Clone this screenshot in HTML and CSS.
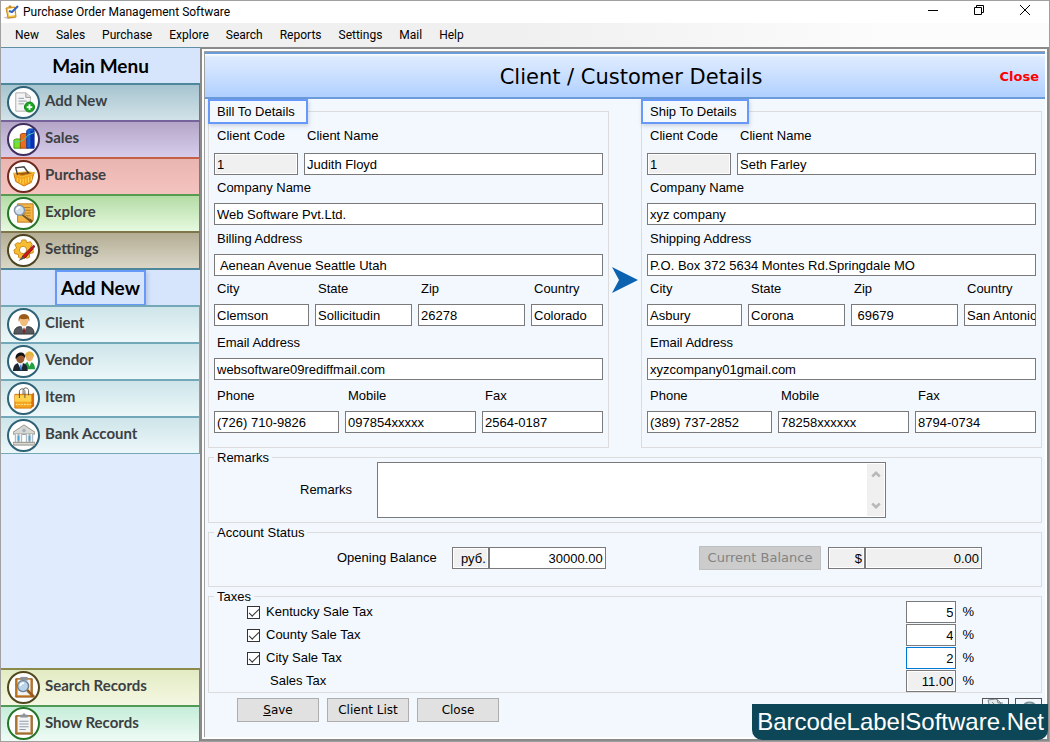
FILE: index.html
```
<!DOCTYPE html>
<html lang="en">
<head>
<meta charset="utf-8">
<title>Purchase Order Management Software</title>
<link rel="stylesheet" href="styles.css">
</head>
<body>
<div class="window">
  <header class="titlebar">
    <svg class="app-icon" viewBox="0 0 16 16" aria-hidden="true"><path d="M0 13l4 2 9-1-3-2z" fill="#c9c9c9"/><path d="M3 4l9-1 1 10-8 1z" fill="#f6c544" stroke="#c98a1c"/><path d="M5 5l6-1 1 7-6 1z" fill="#fff"/><path d="M5 3l2-2 2 2z" fill="#c98a1c"/><path d="M6 7l3 1 6-6" fill="none" stroke="#2d62c4" stroke-width="2"/></svg>
    <h1 class="app-title">Purchase Order Management Software</h1>
    <div class="window-controls">
      <button type="button" class="window-button" aria-label="Minimize"><svg viewBox="0 0 12 12"><path d="M1 6.500h10"/></svg></button>
      <button type="button" class="window-button" aria-label="Restore"><svg viewBox="0 0 12 12"><path d="M1.500 3.500h7v7h-7zM3.500 3.500v-2h7v7h-2"/></svg></button>
      <button type="button" class="window-button" aria-label="Close window"><svg viewBox="0 0 12 12"><path d="M1 1l10 10M11 1L1 11"/></svg></button>
    </div>
  </header>
  <nav class="menubar" aria-label="Application">
    <button type="button">New</button><button type="button">Sales</button><button type="button">Purchase</button><button type="button">Explore</button><button type="button">Search</button><button type="button">Reports</button><button type="button">Settings</button><button type="button">Mail</button><button type="button">Help</button>
  </nav>
  <div class="workspace">
    <aside class="sidebar">
      <h2 class="side-heading">Main Menu</h2>
      <button type="button" class="side-item blue"><span class="disc"><svg viewBox="0 0 24 24"><path d="M3 2h11l5 4v16H3z" fill="#f4f4f4" stroke="#aaa"/><path d="M14 2v5h5" fill="#ddd" stroke="#999"/><path d="M6 8h6M6 11h9M6 14h6" stroke="#8a9aa8"/><circle cx="18" cy="17.500" r="5.500" fill="#17a81f" stroke="#0b7c14"/><path d="M18 14.500v6M15 17.500h6" stroke="#fff" stroke-width="2"/></svg></span><span class="side-label">Add New</span></button>
      <button type="button" class="side-item purple"><span class="disc"><svg viewBox="0 0 24 24"><path d="M1 13l2-1h6v10H1z" fill="#7be02c" stroke="#3d9a12"/><path d="M8 7l2-1h6v16H8z" fill="#e96f1c" stroke="#a8480d"/><path d="M15 3l2-2h6v21h-8z" fill="#1767d6" stroke="#0b2f9c"/><path d="M19 3h4v19h-4z" fill="#0a2fb4"/><path d="M1 15c6 1 11-1 15-7l7-3" fill="none" stroke="#4fd8a8"/></svg></span><span class="side-label">Sales</span></button>
      <button type="button" class="side-item red"><span class="disc"><svg viewBox="0 0 24 24"><path d="M1 10l22-2-3 11-8 4-9-5z" fill="#f5a41c" stroke="#c9760c"/><path d="M0 9l9 4 15-4-7-2z" fill="#e08b12" stroke="#f7c24a"/><path d="M3 9l7 2 10-2-4-1z" fill="#9c5a10"/><path d="M5 11L3 3l9-1 5 7" fill="none" stroke="#444" stroke-width="1.500"/><path d="M5 14v4M8 15v5M11 15v6M14 14v6M17 13v6M20 12v5" stroke="#ffdc5c" fill="none"/></svg></span><span class="side-label">Purchase</span></button>
      <button type="button" class="side-item green"><span class="disc"><svg viewBox="0 0 24 24"><path d="M5 2h17v18l-2 2H5z" fill="#f3b545" stroke="#bd7b1b"/><path d="M10 6h9M11 9h8M12 12h7M12 15h7" stroke="#b87818"/><path d="M10 13l11 9" stroke="#7b5218" stroke-width="3"/><path d="M11 13l7 5" stroke="#e8c783"/><circle cx="7" cy="9" r="5.500" fill="#cfdfed" stroke="#8293a6" stroke-width="1.500"/><path d="M4 9a3 3 0 0 1 4-3" fill="none" stroke="#fff" stroke-width="2"/></svg></span><span class="side-label">Explore</span></button>
      <button type="button" class="side-item brown"><span class="disc"><svg viewBox="0 0 24 24"><path d="M10 1h4l1 3 4-1 2 3-2 3 3 2v4l-4 1v4l-3 1-3-2-2 3-4-2v-3l-4-1-1-4 3-2-2-4 3-2 3 1z" fill="#f7bd32" stroke="#c98410"/><circle cx="11" cy="12" r="4" fill="#fff" stroke="#c98410"/><path d="M10 19L22 7l2 1-11 13z" fill="#d5141c" stroke="#71151a"/><path d="M6 24l4-5 3 2z" fill="#555"/></svg></span><span class="side-label">Settings</span></button>
      <h2 class="side-heading"><span class="highlight">Add New</span></h2>
      <button type="button" class="side-item sky"><span class="disc"><svg viewBox="0 0 24 24"><path d="M1 23c0-6 3-8 7-8h8c4 0 7 2 7 8z" fill="#55585d" stroke="#2f3135"/><path d="M9 14h6l-3 7z" fill="#fff"/><path d="M11.500 16h1l1 5-1.500 1-1.500-1z" fill="#8e2020"/><ellipse cx="12" cy="8.500" rx="4.500" ry="6" fill="#f2bd7c"/><path d="M6.500 10C5 4 8 1 12 1s7 3 5.500 9l-1-4c-3 1-7 1-9 0z" fill="#9b5a17"/></svg></span><span class="side-label">Client</span></button>
      <button type="button" class="side-item sky"><span class="disc"><svg viewBox="0 0 24 24"><path d="M12 21c0-6 2-8 6-8s6 3 6 8z" fill="#23a142"/><path d="M16 13h4l-2 5z" fill="#fff"/><ellipse cx="18" cy="7.500" rx="4" ry="5" fill="#f0b26a"/><path d="M13 8c-1-8 11-9 10 0-2-3-5-3-10 0z" fill="#e4b53a"/><path d="M0 23c0-6 3-9 8-9s8 2 8 9z" fill="#1c2530"/><path d="M5 14h6l-2 8z" fill="#e9f2ff"/><path d="M8 16l1 0 1 6H8z" fill="#1667c9"/><ellipse cx="8" cy="9" rx="4.500" ry="5.500" fill="#9b5a2e"/><path d="M3 10C1 1 15 0 13 9c-2-4-6-4-10 1z" fill="#111"/></svg></span><span class="side-label">Vendor</span></button>
      <button type="button" class="side-item sky"><span class="disc"><svg viewBox="0 0 24 24"><path d="M2 8h18v15H2z" fill="#f5a51f" stroke="#d07a0c"/><path d="M20 8l3-2v15l-3 2z" fill="#d9700b"/><path d="M2 9h18v7H2z" fill="#ffd24d"/><path d="M3 19h17" stroke="#fff3a8" stroke-dasharray="2 1"/><path d="M7 12V5c0-4 6-4 6 0v7M11 8V4c0-4 6-4 6 0v5" fill="none" stroke="#5c5148"/></svg></span><span class="side-label">Item</span></button>
      <button type="button" class="side-item sky last"><span class="disc"><svg viewBox="0 0 24 24"><path d="M0 9L12 1l12 8v2H0z" fill="#d9d9d4" stroke="#8c8c84"/><circle cx="12" cy="7" r="2" fill="#a8b4bd"/><path d="M2 11h20v9H2z" fill="#9aabb8"/><path d="M3 11h2v9H3zM7 11h2v9H7zM15 11h2v9h-2zM19 11h2v9h-2z" fill="#f1f1ee"/><path d="M10 12h4v8h-4z" fill="#fff"/><path d="M5 13h2v5H5zM17 13h2v5h-2z" fill="#4da5d8"/><path d="M0 20h24v3H0z" fill="#d9d9d4" stroke="#8c8c84"/></svg></span><span class="side-label">Bank Account</span></button>
      <div class="side-bottom">
        <button type="button" class="side-item olive"><span class="disc"><svg viewBox="0 0 24 24"><path d="M3 3h18v20H3z" fill="#c97e24" stroke="#8f5410"/><path d="M5 4h14v17H5z" fill="#eef2f6"/><path d="M8 1h8v4H8z" fill="#8d949c"/><path d="M14 14l9 9" stroke="#9a5c1c" stroke-width="3"/><circle cx="11" cy="11" r="6" fill="#b9d3ea" stroke="#6d8092" stroke-width="1.500"/><path d="M8 11a3 3 0 0 1 4-3" fill="none" stroke="#fff" stroke-width="2"/></svg></span><span class="side-label">Search Records</span></button>
        <button type="button" class="side-item mint"><span class="disc"><svg viewBox="0 0 24 24"><path d="M3 3h18v20H3z" fill="#b8803c" stroke="#80500f"/><path d="M5 4h14v17H5z" fill="#f2f4f6"/><path d="M8 2h2l2-2 2 2h2v3H8z" fill="#8d949c"/><path d="M7 9h10M7 12h10M7 15h10M7 18h7" stroke="#8a949e"/></svg></span><span class="side-label">Show Records</span></button>
      </div>
    </aside>
    <main class="panel">
      <div class="panel-inner">
        <div class="panel-header">
          <h2>Client / Customer Details</h2>
          <button type="button" class="close-link">Close</button>
        </div>
        <form class="form">
          <div class="parties">
            <fieldset class="group party">
              <legend><span>Bill To Details</span></legend>
              <div class="row code-row">
                <label class="field">Client Code<input class="input readonly" value="1" readonly></label>
                <label class="field">Client Name<input class="input" value="Judith Floyd"></label>
              </div>
              <div class="row"><label class="field">Company Name<input class="input" value="Web Software Pvt.Ltd."></label></div>
              <div class="row address-row"><label class="field">Billing Address<input class="input" value=" Aenean Avenue Seattle Utah"></label></div>
              <div class="row city-row">
                <label class="field">City<input class="input" value="Clemson"></label>
                <label class="field">State<input class="input" value="Sollicitudin"></label>
                <label class="field">Zip<input class="input" value="26278"></label>
                <label class="field">Country<input class="input" value="Colorado"></label>
              </div>
              <div class="row email-row"><label class="field">Email Address<input class="input" value="websoftware09rediffmail.com"></label></div>
              <div class="row phone-row">
                <label class="field">Phone<input class="input" value="(726) 710-9826"></label>
                <label class="field">Mobile<input class="input" value="097854xxxxx"></label>
                <label class="field">Fax<input class="input" value="2564-0187"></label>
              </div>
            </fieldset>
            <svg class="copy-arrow" viewBox="0 0 26 26" aria-hidden="true"><path d="M0 0l26 13-26 13 7-13z" fill="#0a62b0"/></svg>
            <fieldset class="group party">
              <legend><span>Ship To Details</span></legend>
              <div class="row code-row">
                <label class="field">Client Code<input class="input readonly" value="1" readonly></label>
                <label class="field">Client Name<input class="input" value="Seth Farley"></label>
              </div>
              <div class="row"><label class="field">Company Name<input class="input" value="xyz company"></label></div>
              <div class="row address-row"><label class="field">Shipping Address<input class="input" value="P.O. Box 372 5634 Montes Rd.Springdale MO"></label></div>
              <div class="row city-row">
                <label class="field">City<input class="input" value="Asbury"></label>
                <label class="field">State<input class="input" value="Corona"></label>
                <label class="field">Zip<input class="input" value=" 69679"></label>
                <label class="field">Country<input class="input clipped" value="San Antonio"></label>
              </div>
              <div class="row email-row"><label class="field">Email Address<input class="input" value="xyzcompany01gmail.com"></label></div>
              <div class="row phone-row">
                <label class="field">Phone<input class="input" value="(389) 737-2852"></label>
                <label class="field">Mobile<input class="input" value="78258xxxxxx"></label>
                <label class="field">Fax<input class="input" value="8794-0734"></label>
              </div>
            </fieldset>
          </div>
          <fieldset class="group remarks">
            <legend>Remarks</legend>
            <div class="remarks-row">
              <label for="remarks">Remarks</label>
              <div class="text-area">
                <textarea id="remarks"></textarea>
                <div class="scrollbar" aria-hidden="true">
                  <svg viewBox="0 0 8 6"><path d="M1 5l3-3 3 3"/></svg>
                  <svg viewBox="0 0 8 6"><path d="M1 1l3 3 3-3"/></svg>
                </div>
              </div>
            </div>
          </fieldset>
          <fieldset class="group account">
            <legend>Account Status</legend>
            <div class="account-row">
              <label for="opening">Opening Balance</label>
              <div class="money"><input class="input readonly currency" aria-label="Opening currency" value="руб." readonly><input class="input amount" id="opening" value="30000.00"></div>
              <button type="button" class="button current" disabled>Current Balance</button>
              <div class="money"><input class="input readonly currency" aria-label="Current currency" value="$" readonly><input class="input readonly amount" aria-label="Current balance" value="0.00" readonly></div>
            </div>
          </fieldset>
          <fieldset class="group taxes">
            <legend>Taxes</legend>
            <div class="tax-row"><label><input type="checkbox" class="check" checked>Kentucky Sale Tax</label><input class="input rate" aria-label="Kentucky rate" value="5"><span>%</span></div>
            <div class="tax-row"><label><input type="checkbox" class="check" checked>County Sale Tax</label><input class="input rate" aria-label="County rate" value="4"><span>%</span></div>
            <div class="tax-row"><label><input type="checkbox" class="check" checked>City Sale Tax</label><input class="input rate active" aria-label="City rate" value="2"><span>%</span></div>
            <div class="tax-row"><label class="total" for="total">Sales Tax</label><input class="input readonly rate" id="total" value="11.00" readonly><span>%</span></div>
          </fieldset>
          <div class="actions">
            <button type="button" class="button"><u>S</u>ave</button>
            <button type="button" class="button">Client List</button>
            <button type="button" class="button">Close</button>
            <div class="tools">
              <button type="button" class="tool" aria-label="Print"><svg viewBox="0 0 24 20"><path d="M4 1l8-1 4 3 3 10H7z" fill="#e6eaec" stroke="#7d8b91"/><path d="M8 3l5 5M13 0l1 4 5 0" fill="none" stroke="#7d8b91"/></svg></button>
              <button type="button" class="tool" aria-label="Preview"><svg viewBox="0 0 24 20"><path d="M6 8c2-6 11-6 13 0" fill="none" stroke="#7f959d" stroke-width="2"/><circle cx="13" cy="9" r="4" fill="#9aa8ae"/></svg></button>
            </div>
          </div>
        </form>
      </div>
    </main>
  </div>
  <div class="site-badge">BarcodeLabelSoftware.Net</div>
</div>
</body>
</html>
```
FILE: styles.css
```
* { box-sizing: border-box; }
body {
  margin: 0;
  color: #000;
  font: 13px/16px "Liberation Sans", Arial, sans-serif;
}
h1, h2 { margin: 0; font-weight: 400; }
button, input, textarea { font: inherit; color: inherit; }
button { padding: 0; border: 0; background: none; }

.window {
  position: relative;
  display: flex;
  flex-direction: column;
  min-height: 100vh;
  border: 1px solid #a0a0a0;
  background: #fff;
}
.titlebar { display: flex; align-items: center; height: 22px; padding: 0 1px 0 2px; }
.app-icon { width: 16px; height: 16px; margin-right: 4px; }
.app-title { flex: 1; font: 12px/16px Roboto, sans-serif; }
.window-controls { display: flex; }
.window-button { width: 46px; height: 20px; }
.window-button svg { width: 12px; height: 12px; fill: none; stroke: #000; }

.menubar {
  display: flex;
  gap: 17px;
  height: 24px;
  padding-left: 14px;
  background: linear-gradient(to right, #f0f0f0 50%, #fcfcfc 85%);
  font: 12px/16px Roboto, sans-serif;
}
.workspace { display: flex; flex: 1; }

.sidebar {
  display: flex;
  flex-direction: column;
  width: 199px;
  background: #e0ebfd;
  border-top: 1px solid #5f8fa2;
}
.side-heading {
  display: flex;
  align-items: center;
  justify-content: center;
  height: 35px;
  background: #d6e5fb;
  font: 700 19px/24px Lato, sans-serif;
}
.side-heading ~ .side-heading { height: 37px; border-top: 2px solid #4d8799; }
.highlight {
  padding: 4px;
  border: 2px solid #6699f8;
  box-shadow: 2px 2px 4px #7d8ba855;
}
.side-item {
  display: flex;
  align-items: center;
  gap: 5px;
  height: 37px;
  padding: 0 0 1px 6px;
  border-top: 2px solid;
  border-right: 1px solid;
  border-color: var(--edge);
  background: linear-gradient(var(--from), var(--to));
  color: #3c4043;
  font: 700 15px/20px Lato, sans-serif;
  text-align: left;
}
.side-label { padding-bottom: 4px; }
.side-item.last { height: 38px; border-bottom: 1px solid var(--edge); }
.disc {
  display: flex;
  align-items: center;
  justify-content: center;
  width: 33px;
  height: 33px;
  border: 2px solid var(--ring);
  border-radius: 50%;
  background: #fff;
}
.disc svg { width: 22px; height: 22px; }
.blue { --edge: #4d8799; --ring: #2f6177; --from: #a6c4cf; --to: #d2e2e8; }
.purple { --edge: #74649b; --ring: #41305f; --from: #b4a5c7; --to: #d7cdeb; }
.red { --edge: #c75f47; --ring: #6e2a1c; --from: #e9b5b1; --to: #f5c3bf; }
.green { --edge: #579b50; --ring: #257529; --from: #b4dca5; --to: #e6f9df; }
.brown { --edge: #7f764c; --ring: #4c441f; --from: #b3ad94; --to: #dbd7c7; }
.sky { --edge: #73a8b9; --ring: #2f6177; --from: #cee5e9; --to: #ecf7f9; }
.olive { --edge: #8b8a4a; --ring: #51471c; --from: #e2ebc3; --to: #f5f7e2; }
.side-item.mint { --edge: #4f9a57; --ring: #257529; --from: #c6edd9; --to: #eefbf5; height: 36px; }
.side-bottom { display: flex; flex-direction: column; margin-top: auto; }

.panel {
  display: flex;
  flex: 1;
  min-width: 0;
  padding: 2px;
  border: 2px solid #8a8a8a;
  background: #fff;
}
.panel-inner {
  display: flex;
  flex: 1;
  flex-direction: column;
  min-width: 0;
  border: solid #a0a0a0;
  border-width: 1px 0 0 1px;
  background: #f3f8ff;
}
.panel-header {
  display: grid;
  grid-template-columns: 1fr auto 1fr;
  align-items: center;
  height: 47px;
  padding: 3px 6px 0 18px;
  border-top: 2px solid #6b9bd9;
  border-bottom: 2px solid #6b9bd9;
  background: linear-gradient(#fff, #deebff 3px, #cfe2ff 40%, #b0d0ff);
  font-family: "DejaVu Sans", Verdana, sans-serif;
}
.panel-header h2 { grid-column: 2; font-size: 21px; line-height: 28px; }
.close-link { justify-self: end; color: #f00; font-weight: 700; }

.form { display: flex; flex: 1; flex-direction: column; padding: 0 3px; }
.group { min-width: 0; margin: 4px 0 0; padding: 0 5px; border: 1px solid #dcdcdc; }
.group legend { height: 10px; padding: 0 3px; line-height: 12px; }
.parties { display: grid; grid-template-columns: 1fr 32px 1fr; }
.group.party { margin: 0; padding: 4px 5px 14px; }
.party legend {
  display: flex;
  align-items: center;
  height: 25px;
  margin-left: -6px;
  padding: 1px 11px 0 7px;
  border: 2px solid #6699f8;
  background: #f3f8ff;
  box-shadow: 1px 2px 4px #7d8ba855;
}
.copy-arrow { width: 26px; height: 26px; margin-top: 12px; place-self: center; }
.row { display: grid; gap: 6px; margin-top: 5px; }
.row.code-row { grid-template-columns: 84fr 299fr; margin-top: 0; }
.code-row .field { gap: 9px; }
.address-row { margin-top: 6px; }
.city-row { grid-template-columns: 95fr 97fr 107fr 72fr; }
.email-row { margin-top: 9px; }
.phone-row { grid-template-columns: 125fr 131fr 121fr; margin-top: 8px; }
.field { display: flex; flex-direction: column; gap: 7px; min-width: 0; text-indent: 3px; }
.input {
  width: 100%;
  height: 22px;
  padding: 0 2px;
  border: 1px solid #7a7a7a;
  border-radius: 0;
  background: #fff;
  text-indent: 0;
}
.clipped { padding-right: 0; }
.readonly { background: #f0f0f0; box-shadow: inset 0 0 0 1px #fff; }

.remarks { padding-bottom: 4px; }
.remarks-row { display: flex; gap: 25px; padding: 0 150px 0 86px; }
.remarks-row label { align-self: center; }
.text-area { display: flex; flex: 1; height: 56px; padding: 1px; border: 1px solid #7a7a7a; background: #fff; }
.text-area textarea { flex: 1; border: 0; resize: none; outline: 0; }
.scrollbar {
  display: flex;
  flex-direction: column;
  align-items: center;
  justify-content: space-between;
  width: 17px;
  padding: 6px 0;
  background: #f0f0f0;
}
.scrollbar svg { width: 10px; height: 8px; fill: none; stroke: #b8b8b8; stroke-width: 2; }

.group.account { padding-top: 9px; padding-bottom: 16px; }
.account-row { display: flex; align-items: center; padding: 0 54px 0 123px; }
.account-row label { margin-right: 15px; }
.money { display: flex; width: 154px; }
.currency { width: 37px; text-align: right; }
.amount { flex: 1; min-width: 0; text-align: right; }
.button {
  width: 82px;
  height: 24px;
  border: 1px solid #adadad;
  background: #e1e1e1;
  font: 12px/16px "DejaVu Sans", Verdana, sans-serif;
}
.button.current { width: 122px; margin: 0 7px 0 auto; border-color: #bfbfbf; background: #ccc; color: #838383; font-size: 13px; }

.tax-row { display: flex; align-items: center; margin-bottom: 1px; padding: 0 62px 0 33px; }
.tax-row label { display: flex; flex: 1; align-items: center; gap: 6px; }
.tax-row .total { padding-left: 23px; }
.tax-row .rate { width: 50px; margin-right: 6px; text-align: right; }
.tax-row .active { border-color: #0078d7; }
.taxes .tax-row:last-child { margin-bottom: 0; }
.check {
  width: 13px;
  height: 13px;
  margin: 0;
  appearance: none;
  border: 1px solid #333;
  background: #fff;
}
.check:checked::before {
  content: "";
  display: block;
  width: 9px;
  height: 4px;
  margin: 2px 1px;
  border: solid #333;
  border-width: 0 0 1px 1px;
  transform: rotate(-45deg);
}
.actions { display: flex; gap: 8px; padding: 5px 0 14px 29px; }
.tools { display: flex; gap: 6px; margin-left: auto; }
.tool { width: 27px; height: 24px; border: 1px solid #555; background: #f3f8ff; }
.tool svg { width: 24px; height: 20px; }
.site-badge {
  position: absolute;
  right: 1px;
  bottom: 1px;
  padding: 3px 4px 3px 5px;
  border-radius: 0 0 10px 10px;
  background: #0d4757;
  color: #fff;
  font-size: 24px;
  line-height: 30px;
}
```
